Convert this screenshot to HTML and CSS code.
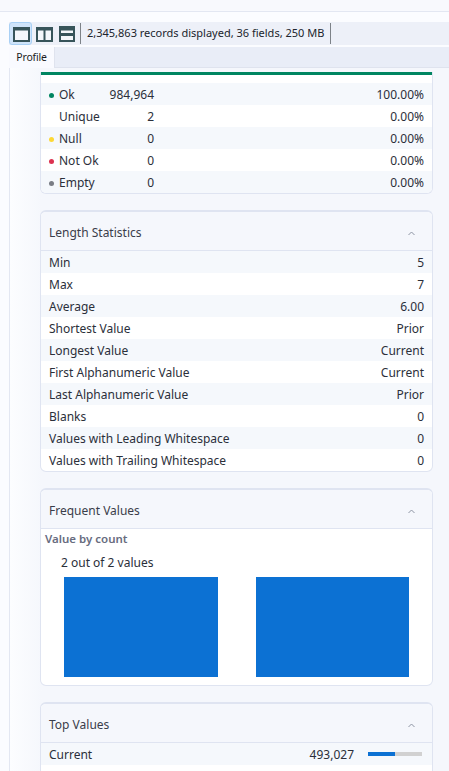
FILE: index.html
```html
<!DOCTYPE html>
<html lang="en">
<head>
    <meta charset="UTF-8">
    <title>Data Profile</title>
    <link rel="stylesheet" href="styles.css">
</head>
<body>
    <div class="top-strip"></div>
    <div class="window">
        <div class="toolbar">
            <button class="view-btn active" aria-label="Single view">
                <svg width="18" height="18" viewBox="0 0 18 18"><rect x="2" y="3" width="15" height="13" fill="#f4f7fb" stroke="#37545a" stroke-width="2"/><rect x="2" y="3" width="15" height="2.5" fill="#37545a"/></svg>
            </button>
            <button class="view-btn" aria-label="Side by side view">
                <svg width="18" height="18" viewBox="0 0 18 18"><rect x="2" y="3" width="15" height="13" fill="#f4f7fb" stroke="#37545a" stroke-width="2"/><rect x="2" y="3" width="15" height="2.5" fill="#37545a"/><rect x="8.5" y="4" width="2" height="12" fill="#37545a"/></svg>
            </button>
            <button class="view-btn" aria-label="Stacked view">
                <svg width="18" height="18" viewBox="0 0 18 18"><rect x="2" y="2" width="14" height="14" fill="#f4f7fb" stroke="#37545a" stroke-width="2"/><rect x="2" y="2" width="14" height="3.5" fill="#37545a"/><rect x="2" y="8" width="14" height="3" fill="#37545a"/></svg>
            </button>
            <span class="status">2,345,863 records displayed, 36 fields, 250 MB</span>
        </div>
        <div class="tabs">
            <div class="tab">Profile</div>
        </div>
        <div class="content">
            <section class="card status-card">
                <div class="green-bar"></div>
                <div class="row status-row"><span class="name"><i class="dot green"></i>Ok</span><span class="count">984,964</span><span class="pct">100.00%</span></div>
                <div class="row status-row"><span class="name"><i class="dot"></i>Unique</span><span class="count">2</span><span class="pct">0.00%</span></div>
                <div class="row status-row"><span class="name"><i class="dot yellow"></i>Null</span><span class="count">0</span><span class="pct">0.00%</span></div>
                <div class="row status-row"><span class="name"><i class="dot red"></i>Not Ok</span><span class="count">0</span><span class="pct">0.00%</span></div>
                <div class="row status-row"><span class="name"><i class="dot grey"></i>Empty</span><span class="count">0</span><span class="pct">0.00%</span></div>
            </section>

            <section class="card">
                <div class="card-header"><span>Length Statistics</span><svg class="chevron" width="7" height="5" viewBox="0 0 7 5"><path d="M0.5 4 L3.5 1 L6.5 4" fill="none" stroke="#8d94a3"/></svg></div>
                <div class="row"><span>Min</span><span>5</span></div>
                <div class="row"><span>Max</span><span>7</span></div>
                <div class="row"><span>Average</span><span>6.00</span></div>
                <div class="row"><span>Shortest Value</span><span>Prior</span></div>
                <div class="row"><span>Longest Value</span><span>Current</span></div>
                <div class="row"><span>First Alphanumeric Value</span><span>Current</span></div>
                <div class="row"><span>Last Alphanumeric Value</span><span>Prior</span></div>
                <div class="row"><span>Blanks</span><span>0</span></div>
                <div class="row"><span>Values with Leading Whitespace</span><span>0</span></div>
                <div class="row"><span>Values with Trailing Whitespace</span><span>0</span></div>
            </section>

            <section class="card chart-card">
                <div class="card-header"><span>Frequent Values</span><svg class="chevron" width="7" height="5" viewBox="0 0 7 5"><path d="M0.5 4 L3.5 1 L6.5 4" fill="none" stroke="#8d94a3"/></svg></div>
                <div class="chart-title">Value by count</div>
                <div class="chart-sub">2 out of 2 values</div>
                <div class="bars">
                    <div class="bar"></div>
                    <div class="bar"></div>
                </div>
            </section>

            <section class="card last-card">
                <div class="card-header"><span>Top Values</span><svg class="chevron" width="7" height="5" viewBox="0 0 7 5"><path d="M0.5 4 L3.5 1 L6.5 4" fill="none" stroke="#8d94a3"/></svg></div>
                <div class="row top-row">
                    <span class="top-name">Current</span>
                    <span>493,027</span>
                    <span class="meter"><span class="meter-fill" style="width: 50%"></span></span>
                </div>
            </section>
        </div>
    </div>
</body>
</html>
```

FILE: styles.css
```css
html, body {
    height: 100%;
}
body {
    margin: 0;
    overflow: hidden;
    background: #fbfcff;
    color: #2b2f3a;
    font-family: "Noto Sans", "Open Sans", sans-serif;
    font-size: 12px;
    line-height: 22px;
}
.top-strip {
    height: 11px;
    background: #f8f9fd;
    border-bottom: 1px solid #e3e7f2;
}
.window {
    height: 749px;
    margin: 10px 0 0 9px;
    overflow: hidden;
}
.toolbar {
    display: flex;
    align-items: center;
    height: 23px;
    background: #edf0f8;
}
.view-btn {
    display: flex;
    align-items: center;
    justify-content: center;
    width: 23px;
    height: 23px;
    padding: 0;
    border: 1px solid transparent;
    border-radius: 3px;
    background: none;
}
.view-btn.active {
    background: #cfe4fa;
    border-color: #a9d0f5;
}
.status {
    margin-left: 2px;
    padding: 0 6px 0 6px;
    height: 21px;
    border-left: 1px solid #7d8288;
    border-right: 1px solid #7d8288;
    line-height: 20px;
    font-size: 11px;
    color: #20242c;
}
.tabs {
    display: flex;
    height: 20px;
    margin-top: 2px;
    background: #e9edf7;
    border-bottom: 1px solid #dfe3ee;
}
.tab {
    width: 45px;
    height: 21px;
    background: #f9faff;
    border-right: 1px solid #dfe3ee;
    text-align: center;
    font-size: 10.5px;
    letter-spacing: -0.2px;
    line-height: 20px;
    color: #1a1c22;
}
.content {
    height: 699px;
    padding: 4px 16px 0 30px;
    background: linear-gradient(to right, #fcfdff, #f5f7fc 32px);
    border-left: 1px solid #e3e7f2;
}
.card {
    margin-bottom: 16px;
    background: #fff;
    border: 1px solid #dfe4f1;
    border-top-width: 2px;
    border-radius: 6px;
    overflow: hidden;
}
.status-card {
    border-top: 0;
    border-radius: 0 0 6px 6px;
}
.green-bar {
    height: 3px;
    margin-bottom: 8px;
    background: #008561;
}
.card-header {
    display: flex;
    align-items: center;
    justify-content: space-between;
    height: 34px;
    padding: 4px 17px 0 8px;
    background: #f5f7fc;
    border-bottom: 1px solid #dfe4f1;
    color: #3a3d4a;
}
.row {
    display: flex;
    justify-content: space-between;
    height: 22px;
    padding: 0 8px;
    line-height: 24px;
}
.row:nth-of-type(even) {
    background: #f5f8fc;
}
.status-row {
    justify-content: flex-start;
}
.name {
    position: relative;
    box-sizing: border-box;
    width: 60px;
    padding-left: 10px;
}
.dot {
    position: absolute;
    left: 0;
    top: 10px;
    width: 5px;
    height: 5px;
    border-radius: 50%;
}
.green { background: #008561; }
.yellow { background: #fdd835; }
.red { background: #dc3250; }
.grey { background: #7a7d85; }
.count {
    width: 45px;
    text-align: right;
}
.pct {
    margin-left: auto;
}
.chart-card {
    height: 195px;
}
.chart-title {
    padding-left: 4px;
    height: 21px;
    line-height: 19px;
    font-size: 11.5px;
    font-weight: 600;
    color: #686c80;
}
.chart-sub {
    padding-left: 20px;
    height: 27px;
    line-height: 26px;
    color: #2b2f3a;
}
.bars {
    display: flex;
    gap: 38px;
    padding-left: 23px;
}
.bar {
    width: 153.5px;
    height: 100px;
    background: #0c71d3;
}
.top-row {
    gap: 14px;
    background: #f5f7fc;
}
.top-name {
    margin-right: auto;
}
.meter {
    width: 54px;
    height: 4px;
    margin: 9px 2px 0 0;
    background: #d1d1d1;
}
.meter-fill {
    display: block;
    height: 100%;
    background: #0c71d3;
}
.last-card {
    height: 200px;
}
```
